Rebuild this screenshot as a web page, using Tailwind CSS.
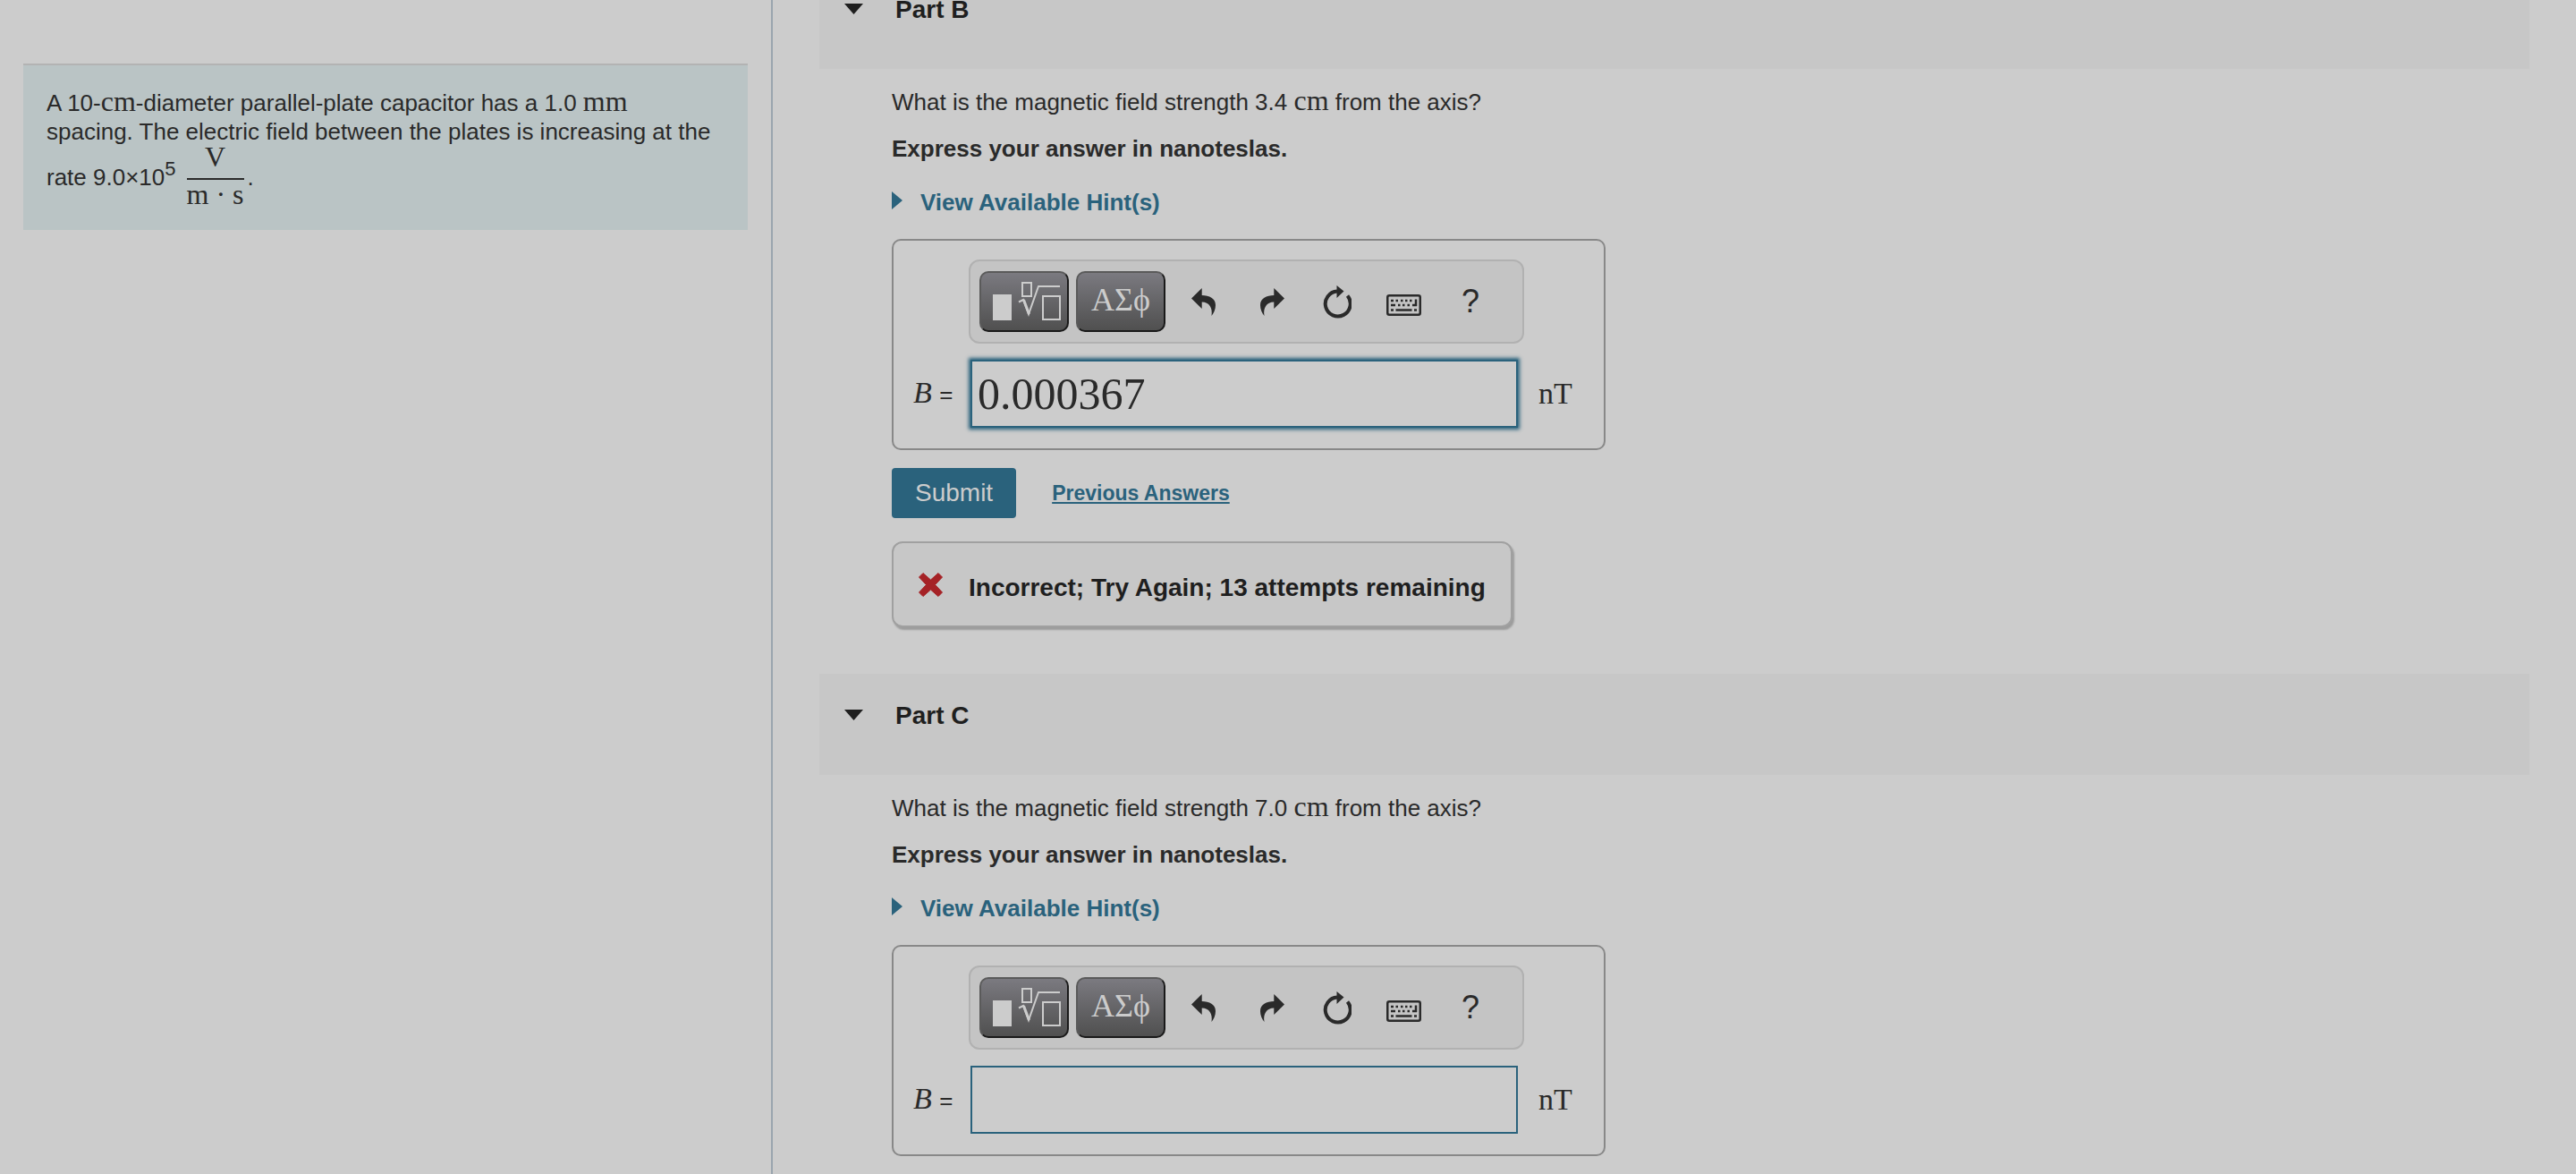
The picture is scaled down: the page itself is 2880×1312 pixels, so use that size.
<!DOCTYPE html>
<html lang="en">

<head>
    <meta charset="UTF-8">
    <meta name="viewport" content="width=device-width, initial-scale=1.0">
    <title>Parallel-Plate Capacitor</title>
    <script src="https://cdn.jsdelivr.net/npm/@tailwindcss/browser@4"></script>
</head>

<body class="bg-[#cccccc] text-[#2a2a2a] font-['Liberation_Sans',Arial,sans-serif] text-[26px] leading-8">
    <!-- shared toolbar icons -->
    <svg class="hidden">
        <symbol id="icon-template" viewBox="0 0 100 68">
            <rect x="15" y="26" width="21" height="29" fill="#cccccc" />
            <g fill="none" stroke="#cccccc" stroke-width="2">
                <rect x="48" y="13" width="10" height="15" />
                <rect x="71" y="28" width="19" height="26" />
                <path d="M44 34.500L49 32L55 48L66 17H90" />
                <path d="M49.500 32L55.500 48" stroke-width="3" />
            </g>
        </symbol>
        <symbol id="icon-undo" viewBox="0 0 27 31">
            <path d="M0 11.500L11.700 0V8C20 8 27 11.500 27 19C27 24 25 28 22.500 31C24 22 20 15.500 11.700 15.500V23Z" fill="currentColor" />
        </symbol>
        <symbol id="icon-reset" viewBox="0 0 32 37">
            <path d="M16 6.500A14 14 0 1 0 27.500 11.500" fill="none" stroke="currentColor" stroke-width="4" />
            <path d="M15.500 0L23.500 6.500L15.500 14Z" fill="currentColor" />
        </symbol>
        <symbol id="icon-keyboard" viewBox="0 0 39 24">
            <rect x="1.250" y="1.250" width="36.500" height="21.500" rx="2" fill="none" stroke="currentColor" stroke-width="2.500" />
            <path d="M5 7H8M10.500 7H13M16 7H18.500M21 7H23.500M26 7H28.500M5 12H10M13 12H15.500M18 12H20.500M23.500 12H26M29 12H34M5 17.500H8M10.500 17.500H28.500M31 17.500H34" fill="none" stroke="currentColor" stroke-width="2.500" />
            <path d="M33 5.500V13" fill="none" stroke="currentColor" stroke-width="2.500" />
        </symbol>
    </svg>

    <div class="flex h-screen overflow-hidden">
        <aside class="w-[30%] shrink-0 border-r-2 border-[#9aa5ae] pl-[26px] pr-[26px] pt-[71px]">
            <div class="border-t-2 border-[#b3b3b3] bg-[#bac4c5] px-[26px] pt-[26px] pb-7">
                <p>A 10-<span class="font-['Liberation_Serif',serif] text-[32px] leading-6">cm</span>-diameter parallel-plate capacitor has a 1.0 <span class="font-['Liberation_Serif',serif] text-[32px] leading-6">mm</span><br>
                    spacing. The electric field between the plates is increasing at the</p>
                <div class="flex items-center">
                    <span class="pt-1">rate 9.0×10<sup class="text-[22px] leading-none">5</sup></span>
                    <span class="ml-3 flex flex-col items-center font-['Liberation_Serif',serif] text-[32px] leading-6">
                        <span class="pb-3">V</span>
                        <span class="border-t-2 border-[#2a2a2a] pt-1">m · s</span>
                    </span>
                    <span class="pl-1 pt-1">.</span>
                </div>
            </div>
        </aside>

        <!-- the top of Part B is scrolled out of view -->
        <main class="-mt-9 min-w-0 flex-1 px-[52px]">
            <section>
                <h2 class="flex h-[113px] gap-9 bg-[#c7c7c7] pl-7 pt-[31px] text-[28px] font-bold text-[#1f1f1f]">
                    <svg class="mt-[9px] h-3 w-[21px]" viewBox="0 0 21 12"><path d="M0 0H21L10.500 12Z" fill="currentColor" /></svg>
                    Part B
                </h2>
                <div class="pl-[81px] pb-[52px] pt-[21px]">
                    <p>What is the magnetic field strength 3.4 <span class="font-['Liberation_Serif',serif] text-[32px] leading-6">cm</span> from the axis?</p>
                    <p class="mt-5 font-bold">Express your answer in nanoteslas.</p>
                    <a href="#" class="mt-7 flex gap-5 font-bold text-[#2a627c]">
                        <svg class="mt-1 h-5 w-3" viewBox="0 0 12 20"><path d="M0 0L12 10L0 20Z" fill="currentColor" /></svg>
                        View Available Hint(s)
                    </a>
                    <div class="mt-[25px] w-[798px] rounded-[10px] border-2 border-[#888888] pb-[23px] pt-[21px]">
                        <div class="ml-[84px] flex h-[94px] w-[621px] items-center rounded-xl border-2 border-[#b1b1b1] bg-[#c4c4c4] pl-[10px] text-[#2a2a2a]">
                            <button type="button" aria-label="Templates" class="h-[68px] w-[100px] rounded-[10px] border-2 border-b-[#1a1a1a] border-l-[#5a5a5a] border-r-[#1a1a1a] border-t-[#5a5a5a] bg-linear-to-b from-[#7b7a80] to-[#505050]">
                                <svg class="-ml-0.5 -mt-0.5 h-[68px] w-[100px]"><use href="#icon-template" /></svg>
                            </button>
                            <button type="button" aria-label="Symbols" class="ml-2 h-[68px] w-[100px] rounded-[10px] border-2 border-b-[#1a1a1a] border-l-[#5a5a5a] border-r-[#1a1a1a] border-t-[#5a5a5a] bg-linear-to-b from-[#7b7a80] to-[#505050] pb-1 font-['Liberation_Serif',serif] text-[36px] text-[#cccccc]">ΑΣϕ</button>
                            <button type="button" aria-label="Undo" class="ml-[29px]"><svg class="h-[31px] w-[27px]"><use href="#icon-undo" /></svg></button>
                            <button type="button" aria-label="Redo" class="ml-[50px]"><svg class="h-[31px] w-[27px] -scale-x-100"><use href="#icon-undo" /></svg></button>
                            <button type="button" aria-label="Reset" class="ml-[43px]"><svg class="h-[37px] w-8"><use href="#icon-reset" /></svg></button>
                            <button type="button" aria-label="Keyboard shortcuts" class="ml-[39px] pt-2"><svg class="h-6 w-[39px]"><use href="#icon-keyboard" /></svg></button>
                            <button type="button" aria-label="Help" class="ml-[45px] text-[36px]">?</button>
                        </div>
                        <div class="mt-[18px] flex items-center font-['Liberation_Serif',serif] text-[34px]">
                            <label for="answerB" class="w-[86px] shrink-0 pl-[22px]"><i>B</i> <span class="font-['Liberation_Sans',sans-serif] text-[26px]">=</span></label>
                            <input type="text" id="answerB" value="0.000367"
                                class="h-[76px] w-[612px] border-2 border-[#2a627c] bg-transparent px-[6px] text-[50px] shadow-[0_0_4px_2px_#2a627c] outline-none">
                            <span class="ml-[23px]">nT</span>
                        </div>
                    </div>
                    <div class="mt-5 flex items-center gap-10">
                        <button type="submit" class="h-14 rounded-[4px] bg-[#2a627c] px-[26px] text-[28px] text-[#cccccc]">Submit</button>
                        <a href="#" class="text-[23px] font-bold text-[#2a627c] underline decoration-2 underline-offset-2">Previous Answers</a>
                    </div>
                    <div class="mt-[26px] flex h-24 w-[694px] items-center rounded-xl border-2 border-[#a0a0a0] bg-[#c7c7c7] pl-7 text-[28px] font-bold text-[#1f1f1f] shadow-[2px_3px_2px_#9c9c9c]">
                        <svg class="h-[27px] w-[27px]" viewBox="0 0 27 27"><path d="M5 0.500L13.500 8L22 0.500L26.500 5L18.500 13.500L26.500 22L22 26.500L13.500 19L5 26.500L0.500 22L8.500 13.500L0.500 5Z" fill="#a52226" stroke="#a52226" stroke-linejoin="round" /></svg>
                        <span class="pl-[29px] pt-2">Incorrect; Try Again; 13 attempts remaining</span>
                    </div>
                </div>
            </section>

            <section>
                <h2 class="flex h-[113px] gap-9 bg-[#c7c7c7] pl-7 pt-[31px] text-[28px] font-bold text-[#1f1f1f]">
                    <svg class="mt-[9px] h-3 w-[21px]" viewBox="0 0 21 12"><path d="M0 0H21L10.500 12Z" fill="currentColor" /></svg>
                    Part C
                </h2>
                <div class="pl-[81px] pb-[52px] pt-[21px]">
                    <p>What is the magnetic field strength 7.0 <span class="font-['Liberation_Serif',serif] text-[32px] leading-6">cm</span> from the axis?</p>
                    <p class="mt-5 font-bold">Express your answer in nanoteslas.</p>
                    <a href="#" class="mt-7 flex gap-5 font-bold text-[#2a627c]">
                        <svg class="mt-1 h-5 w-3" viewBox="0 0 12 20"><path d="M0 0L12 10L0 20Z" fill="currentColor" /></svg>
                        View Available Hint(s)
                    </a>
                    <div class="mt-[25px] w-[798px] rounded-[10px] border-2 border-[#888888] pb-[23px] pt-[21px]">
                        <div class="ml-[84px] flex h-[94px] w-[621px] items-center rounded-xl border-2 border-[#b1b1b1] bg-[#c4c4c4] pl-[10px] text-[#2a2a2a]">
                            <button type="button" aria-label="Templates" class="h-[68px] w-[100px] rounded-[10px] border-2 border-b-[#1a1a1a] border-l-[#5a5a5a] border-r-[#1a1a1a] border-t-[#5a5a5a] bg-linear-to-b from-[#7b7a80] to-[#505050]">
                                <svg class="-ml-0.5 -mt-0.5 h-[68px] w-[100px]"><use href="#icon-template" /></svg>
                            </button>
                            <button type="button" aria-label="Symbols" class="ml-2 h-[68px] w-[100px] rounded-[10px] border-2 border-b-[#1a1a1a] border-l-[#5a5a5a] border-r-[#1a1a1a] border-t-[#5a5a5a] bg-linear-to-b from-[#7b7a80] to-[#505050] pb-1 font-['Liberation_Serif',serif] text-[36px] text-[#cccccc]">ΑΣϕ</button>
                            <button type="button" aria-label="Undo" class="ml-[29px]"><svg class="h-[31px] w-[27px]"><use href="#icon-undo" /></svg></button>
                            <button type="button" aria-label="Redo" class="ml-[50px]"><svg class="h-[31px] w-[27px] -scale-x-100"><use href="#icon-undo" /></svg></button>
                            <button type="button" aria-label="Reset" class="ml-[43px]"><svg class="h-[37px] w-8"><use href="#icon-reset" /></svg></button>
                            <button type="button" aria-label="Keyboard shortcuts" class="ml-[39px] pt-2"><svg class="h-6 w-[39px]"><use href="#icon-keyboard" /></svg></button>
                            <button type="button" aria-label="Help" class="ml-[45px] text-[36px]">?</button>
                        </div>
                        <div class="mt-[18px] flex items-center font-['Liberation_Serif',serif] text-[34px]">
                            <label for="answerC" class="w-[86px] shrink-0 pl-[22px]"><i>B</i> <span class="font-['Liberation_Sans',sans-serif] text-[26px]">=</span></label>
                            <input type="text" id="answerC"
                                class="h-[76px] w-[612px] border-2 border-[#2a627c] bg-transparent px-[6px] text-[50px] outline-none">
                            <span class="ml-[23px]">nT</span>
                        </div>
                    </div>
                </div>
            </section>
        </main>
    </div>
</body>

</html>
